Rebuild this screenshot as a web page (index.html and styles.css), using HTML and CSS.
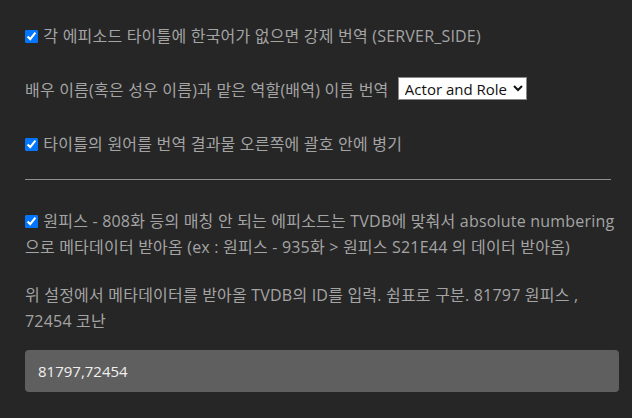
FILE: index.html
```html
<!DOCTYPE html>
<html lang="ko">
<head>
    <meta charset="UTF-8">
    <title>메타데이터 설정</title>
    <link rel="stylesheet" href="styles.css">
</head>
<body>

    <div class="settings">
        <div class="row">
            <label><input type="checkbox" checked> 각 에피소드 타이틀에 한국어가 없으면 강제 번역 (SERVER_SIDE)</label>
        </div>

        <div class="row">
            배우 이름(혹은 성우 이름)과 맡은 역할(배역) 이름 번역
            <select class="pick">
                <option>Actor and Role</option>
                <option>Actor</option>
                <option>Role</option>
            </select>
        </div>

        <div class="row">
            <label><input type="checkbox" checked> 타이틀의 원어를 번역 결과물 오른쪽에 괄호 안에 병기</label>
            <div class="rule"></div>
        </div>

        <div class="row tight">
            <label><input type="checkbox" checked> 원피스 - 808화 등의 매칭 안 되는 에피소드는 TVDB에 맞춰서 absolute numbering 으로 메타데이터 받아옴 (ex : 원피스 - 935화 &gt; 원피스 S21E44 의 데이터 받아옴)</label>
        </div>

        <div class="row">
            위 설정에서 메타데이터를 받아올 TVDB의 ID를 입력. 쉼표로 구분. 81797 원피스 , 72454&nbsp;코난
            <input type="text" class="ids" value="81797,72454">
        </div>
    </div>

</body>
</html>
```

FILE: styles.css
```css
body {
    margin: 0;
    padding: 23px 13px 0 25px;
    background: #262626;
    color: #a4a4a4;
    font-family: "Open Sans", "Noto Sans CJK KR", sans-serif;
    font-size: 16px;
    line-height: 26px;
    letter-spacing: 0.2px;
}
.row {
    margin-bottom: 28px;
}
.row.tight {
    margin-bottom: 22px;
}
.row input[type=checkbox] {
    width: 13px;
    height: 13px;
    margin: 0 1px 0 0;
    vertical-align: -1px;
}
.pick {
    font-family: "Open Sans", sans-serif;
    font-size: 15px;
    letter-spacing: 0;
    height: 23px;
    margin-left: 5px;
    padding: 0 2px;
    color: #111;
    background: #fff;
    border: 1px solid #888;
    border-radius: 0;
    vertical-align: 1px;
}
.rule {
    width: 586px;
    height: 22px;
    margin-bottom: 5px;
    border-bottom: 1px solid #8f8f8f;
}
.ids {
    display: block;
    box-sizing: border-box;
    width: 100%;
    height: 42px;
    margin-top: 16px;
    padding: 0 13px;
    border: none;
    border-radius: 4px;
    background: #5f5f5f;
    color: #f0f0f0;
    font-family: "Open Sans", sans-serif;
    font-size: 15px;
    letter-spacing: 0;
}
```
